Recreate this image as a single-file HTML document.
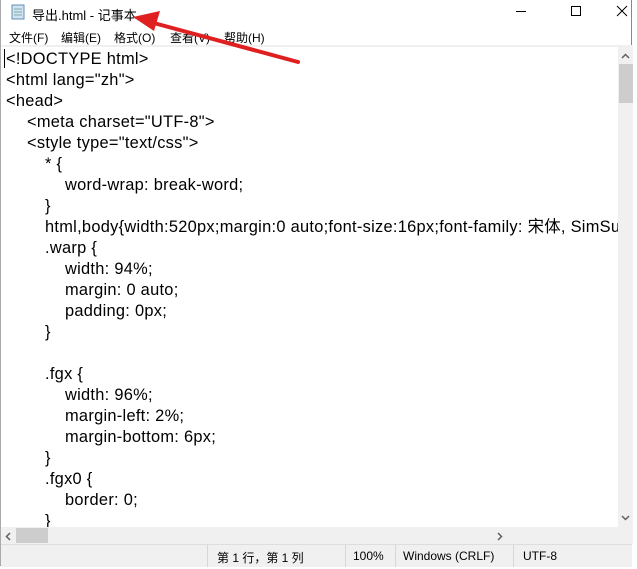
<!DOCTYPE html>
<html><head><meta charset="utf-8"><style>
body{margin:0;width:637px;height:569px;background:#fff;position:relative;overflow:hidden;font-family:"Liberation Sans","Noto Sans CJK SC",sans-serif;}
.win{position:absolute;left:0;top:0;width:632px;height:566px;border-right:1px solid #888;border-bottom:1px solid #888;border-left:1px solid #aaa;box-sizing:border-box;background:#fff}
.title{position:absolute;left:31px;top:5px;font-size:13px;color:#000}
.menu{position:absolute;top:29px;font-size:12px;color:#000}
.sep{position:absolute;left:0;top:45px;width:632px;height:2px;background:#f0f0f0}
.code{position:absolute;left:0;top:47px;width:617px;height:480px;overflow:hidden;font-size:16.4px;letter-spacing:0.28px;color:#000;white-space:pre}
.code div{position:absolute;height:21px;line-height:21px;margin-top:1px}
.vs{position:absolute;left:617px;top:47px;width:15px;height:480px;background:#f0f0f0}
.hs{position:absolute;left:0;top:527px;width:617px;height:17px;background:#f0f0f0}
.status{position:absolute;left:0;top:544px;width:631px;height:22px;background:#f0f0f0;border-top:1px solid #ddd;font-size:12px}
.status span{position:absolute;top:4px}
.status i{position:absolute;top:0;width:1px;height:22px;background:#d7d7d7}
</style></head><body>
<div class="win">
<svg style="position:absolute;left:9px;top:4px" width="16" height="16"><rect x="2" y="1" width="12" height="14" fill="#cfe3f2" stroke="#6a8db0"/><line x1="4" y1="5" x2="12" y2="5" stroke="#8aa"/><line x1="4" y1="8" x2="12" y2="8" stroke="#8aa"/><line x1="4" y1="11" x2="12" y2="11" stroke="#8aa"/></svg>
<div class="title">导出.html - 记事本</div>
<svg style="position:absolute;left:510px;top:4px" width="120" height="16"><line x1="5" y1="7.5" x2="15" y2="7.5" stroke="#000"/><rect x="60.5" y="2.5" width="9" height="9" fill="none" stroke="#000"/><path d="M106 2L116 12M116 2L106 12" stroke="#000"/></svg>
<div class="menu" style="left:8px">文件(F)</div>
<div class="menu" style="left:60px">编辑(E)</div>
<div class="menu" style="left:113px">格式(O)</div>
<div class="menu" style="left:169px">查看(V)</div>
<div class="menu" style="left:223px">帮助(H)</div>
<div class="sep"></div>
<div class="code">
<div style="left:5px;top:1px">&lt;!DOCTYPE html&gt;</div>
<div style="left:3px;top:1px;width:1px;height:19px;background:#000"></div>
<div style="left:5px;top:22px">&lt;html lang="zh"&gt;</div>
<div style="left:5px;top:43px">&lt;head&gt;</div>
<div style="left:26px;top:64px">&lt;meta charset="UTF-8"&gt;</div>
<div style="left:26px;top:85px">&lt;style type="text/css"&gt;</div>
<div style="left:44px;top:106px">* {</div>
<div style="left:64px;top:127px">word-wrap: break-word;</div>
<div style="left:44px;top:148px">}</div>
<div style="left:44px;top:169px">html,body{width:520px;margin:0 auto;font-size:16px;font-family: 宋体, SimSun;}</div>
<div style="left:44px;top:190px">.warp {</div>
<div style="left:64px;top:211px">width: 94%;</div>
<div style="left:64px;top:232px">margin: 0 auto;</div>
<div style="left:64px;top:253px">padding: 0px;</div>
<div style="left:44px;top:274px">}</div>
<div style="left:44px;top:316px">.fgx {</div>
<div style="left:64px;top:337px">width: 96%;</div>
<div style="left:64px;top:358px">margin-left: 2%;</div>
<div style="left:64px;top:379px">margin-bottom: 6px;</div>
<div style="left:44px;top:400px">}</div>
<div style="left:44px;top:421px">.fgx0 {</div>
<div style="left:64px;top:442px">border: 0;</div>
<div style="left:44px;top:463px">}</div>
</div>
<div class="vs">
<svg style="position:absolute;left:3px;top:6px" width="9" height="6"><path d="M1 5L4.5 1.5L8 5" stroke="#606060" stroke-width="1.5" fill="none"/></svg>
<div style="position:absolute;left:1px;top:17px;width:14px;height:39px;background:#cdcdcd"></div>
<svg style="position:absolute;left:3px;top:468px" width="9" height="6"><path d="M1 1L4.5 4.5L8 1" stroke="#606060" stroke-width="1.5" fill="none"/></svg>
</div>
<div class="hs">
<svg style="position:absolute;left:4px;top:5px" width="6" height="9"><path d="M5 1L1.5 4.5L5 8" stroke="#606060" stroke-width="1.5" fill="none"/></svg>
<div style="position:absolute;left:15px;top:1px;width:32px;height:15px;background:#cdcdcd"></div>
<svg style="position:absolute;left:496px;top:5px" width="6" height="9"><path d="M1 1L4.5 4.5L1 8" stroke="#606060" stroke-width="1.5" fill="none"/></svg>
</div>
<div class="vs" style="top:527px;height:17px"></div>
<div class="status">
<i style="left:206px"></i><span style="left:216px">第 1 行，第 1 列</span>
<i style="left:344px"></i><span style="left:352px">100%</span>
<i style="left:394px"></i><span style="left:402px">Windows (CRLF)</span>
<i style="left:512px"></i><span style="left:522px">UTF-8</span>
</div>
</div>
<svg style="position:absolute;left:0;top:0" width="637" height="569"><line x1="298" y1="62" x2="150" y2="22" stroke="#e02020" stroke-width="4" stroke-linecap="round"/><path d="M133 17L160 11L154 31Z" fill="#e02020"/></svg>
</body></html>
